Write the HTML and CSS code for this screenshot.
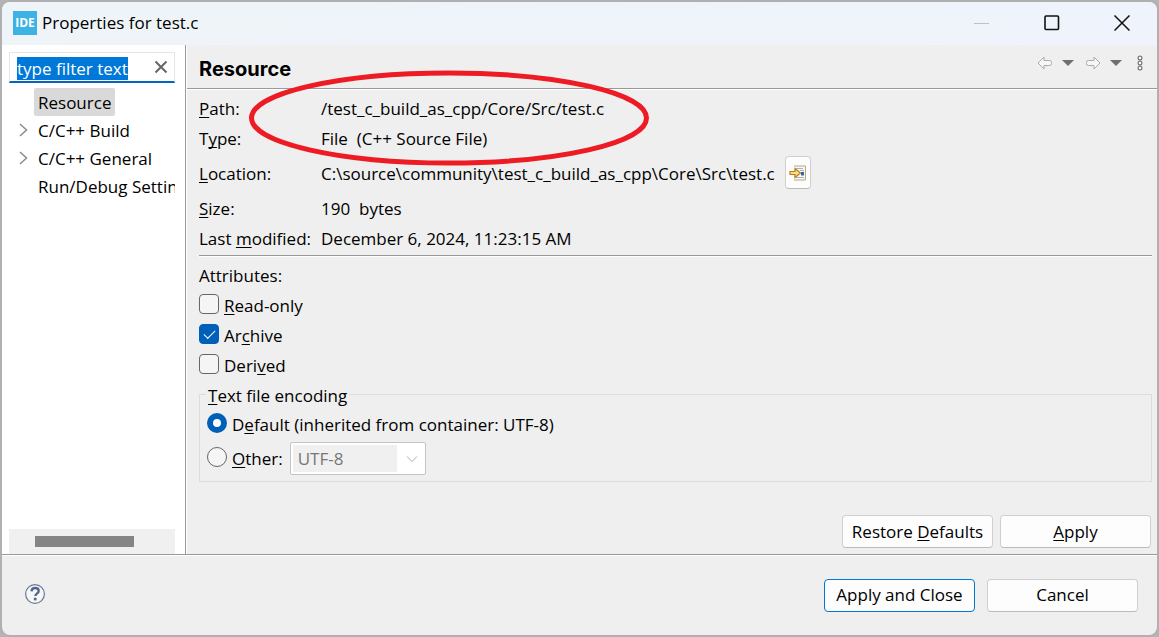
FILE: index.html
```html
<!DOCTYPE html>
<html lang="en">
<head>
<meta charset="utf-8">
<title>Properties for test.c</title>
<link rel="stylesheet" href="styles.css">
</head>
<body>
<div class="dialog">
  <header class="titlebar">
    <span class="app-icon">IDE</span>
    <h1 class="title">Properties for test.c</h1>
    <div class="window-controls">
      <button class="icon-button" aria-label="Minimize" disabled><svg width="16" height="16" viewBox="0 0 16 16"><path d="M0 8.500h15" stroke="#bcbfc6"/></svg></button>
      <button class="icon-button" aria-label="Maximize"><svg width="16" height="16" viewBox="0 0 16 16"><rect x="1" y="1" width="13.500" height="13.500" rx="1" fill="none" stroke="#111" stroke-width="1.600"/></svg></button>
      <button class="icon-button" aria-label="Close"><svg width="16" height="16" viewBox="0 0 16 16"><path d="M.5.5l15 15M15.500.5l-15 15" stroke="#111" stroke-width="1.500"/></svg></button>
    </div>
  </header>

  <div class="body">
    <nav class="sidebar">
      <div class="filter">
        <input class="filter-input" id="filter" type="text" value="type filter text" aria-label="Filter">
        <button class="icon-button" aria-label="Clear"><svg width="14" height="14" viewBox="0 0 14 14"><path d="M1.500 1.500l11 11M12.500 1.500l-11 11" stroke="#666" stroke-width="2"/></svg></button>
      </div>
      <ul class="tree">
        <li class="tree-item"><span class="twisty"></span><span class="tree-label selected">Resource</span></li>
        <li class="tree-item"><span class="twisty"><svg width="9" height="14" viewBox="0 0 9 14"><path d="M1 1l6.500 6L1 13" fill="none" stroke="#8c8c8c" stroke-width="1.500"/></svg></span><span class="tree-label">C/C++ Build</span></li>
        <li class="tree-item"><span class="twisty"><svg width="9" height="14" viewBox="0 0 9 14"><path d="M1 1l6.500 6L1 13" fill="none" stroke="#8c8c8c" stroke-width="1.500"/></svg></span><span class="tree-label">C/C++ General</span></li>
        <li class="tree-item"><span class="twisty"></span><span class="tree-label">Run/Debug Settings</span></li>
      </ul>
      <div class="scrollbar"><div class="thumb"></div></div>
    </nav>

    <main class="page">
      <div class="page-header">
        <h2 class="page-title">Resource</h2>
        <div class="page-tools">
          <button class="icon-button" aria-label="Back"><svg width="16" height="14" viewBox="0 0 16 14"><path d="M1 7l6-6v3.500h5.500q2 0 2 2v1q0 2-2 2H7V13z" fill="#f7f7f7" stroke="#aaa" stroke-linejoin="round"/></svg></button>
          <button class="icon-button" aria-label="Back history"><svg width="12" height="6" viewBox="0 0 12 6"><path d="M0 0h12L6 6z" fill="#6e6e73"/></svg></button>
          <button class="icon-button forward" aria-label="Forward"><svg width="16" height="14" viewBox="0 0 16 14"><path d="M15 7L9 1v3.500H3.500q-2 0-2 2v1q0 2 2 2H9V13z" fill="#f7f7f7" stroke="#aaa" stroke-linejoin="round"/></svg></button>
          <button class="icon-button" aria-label="Forward history"><svg width="12" height="6" viewBox="0 0 12 6"><path d="M0 0h12L6 6z" fill="#6e6e73"/></svg></button>
          <button class="icon-button menu" aria-label="View menu"><svg width="6" height="16" viewBox="0 0 6 16" fill="#fff" stroke="#77777c" stroke-width="1.200"><circle cx="3" cy="3" r="1.900"/><circle cx="3" cy="8" r="1.900"/><circle cx="3" cy="13" r="1.900"/></svg></button>
        </div>
      </div>

      <div class="page-content">
        <svg class="highlight" width="402" height="98" viewBox="0 0 402 98"><ellipse cx="201" cy="49" rx="197.500" ry="45" fill="none" stroke="#ed1c24" stroke-width="5"/></svg>
        <dl class="details">
          <dt><u>P</u>ath:</dt><dd>/test_c_build_as_cpp/Core/Src/test.c</dd>
          <dt>T<u>y</u>pe:</dt><dd>File&nbsp; (C++ Source File)</dd>
          <dt class="tall"><span><u>L</u>ocation:</span></dt>
          <dd class="tall">C:\source\community\test_c_build_as_cpp\Core\Src\test.c
            <button class="button reveal" aria-label="Show in system explorer"><svg width="18" height="16" viewBox="0 0 18 16"><path d="M5 .5h11.500v15H5z" fill="#f4f6fa"/><path d="M5 1h11.500v14H5" fill="none" stroke="#c3ab6c"/><path d="M7 3.500h7M11 5.500h4M12 10.500h3M7 12.500h8" stroke="#9db2d6"/><path d="M12 7h3v3h-3z" fill="#36649f"/><path d="M1 6.500h5V3.500L11.500 8 6 12.500v-3H1z" fill="#fbdf82" stroke="#ba7c16" stroke-width="1.200"/></svg></button>
          </dd>
          <dt><u>S</u>ize:</dt><dd>190&nbsp; bytes</dd>
          <dt>Last <u>m</u>odified:</dt><dd>December 6, 2024, 11:23:15 AM</dd>
        </dl>

        <section class="attributes">
          <h3 class="section-title">Attributes:</h3>
          <label class="option"><input class="check" type="checkbox"><span><u>R</u>ead-only</span></label>
          <label class="option"><input class="check" type="checkbox" checked><span>Ar<u>c</u>hive</span></label>
          <label class="option"><input class="check" type="checkbox"><span>Deri<u>v</u>ed</span></label>
        </section>

        <fieldset class="encoding">
          <legend><u>T</u>ext file encoding</legend>
          <label class="option"><input class="radio" type="radio" name="encoding" checked><span>D<u>e</u>fault (inherited from container: UTF-8)</span></label>
          <div class="other-row">
            <label class="option"><input class="radio" type="radio" name="encoding"><span><u>O</u>ther:</span></label>
            <div class="combo">
              <select class="combo-select" aria-label="Other encoding" disabled><option>UTF-8</option></select>
              <svg width="12" height="8" viewBox="0 0 12 8"><path d="M1 1.500l5 5 5-5" fill="none" stroke="#aaa"/></svg>
            </div>
          </div>
        </fieldset>

        <div class="page-actions">
          <button class="button">Restore <u>D</u>efaults</button>
          <button class="button"><u>A</u>pply</button>
        </div>
      </div>
    </main>
  </div>

  <footer class="footer">
    <button class="icon-button" aria-label="Help"><svg width="22" height="22" viewBox="0 0 22 22"><circle cx="11" cy="11" r="9.400" fill="#f6f6f6" stroke="#66799c" stroke-width="1.200"/><path d="M7.500 8.300C7.700 6 9.200 5 11.200 5c2 0 3.500 1.100 3.500 2.900 0 2.700-3.300 2.700-3.300 5" fill="none" stroke="#52658c" stroke-width="2.300"/><circle cx="11.200" cy="16" r="1.500" fill="#52658c"/></svg></button>
    <div class="footer-actions">
      <button class="button primary">Apply and Close</button>
      <button class="button">Cancel</button>
    </div>
  </footer>
</div>
<script src="script.js"></script>
</body>
</html>
```
FILE: styles.css
```css
* { box-sizing: border-box; }
body {
  margin: 0;
  background: #b4b4b4;
  color: #000;
  font: 17px/24px "Open Sans", "Noto Sans", sans-serif;
}
button, input, select { font: inherit; color: inherit; }
h1, h2, h3, dl, dd, ul, fieldset { margin: 0; padding: 0; }
u { text-underline-offset: 2px; text-decoration-thickness: 1px; text-decoration-skip-ink: none; }
svg { display: block; }

.dialog {
  display: flex;
  flex-direction: column;
  height: 100vh;
  border: 2px solid #b0b0b0;
  border-radius: 10px;
  background: #efefef;
  overflow: hidden;
}
.icon-button {
  display: flex;
  padding: 0;
  border: 0;
  background: none;
}

.titlebar {
  display: flex;
  align-items: center;
  height: 43px;
  padding: 0 27px 2px 11px;
  background: linear-gradient(90deg, #eef4f8, #eff3fb);
}
.app-icon {
  width: 24px;
  background: #3db2e5;
  color: #fff;
  font-size: 12px;
  font-weight: 700;
  text-align: center;
}
.title { margin-left: 5px; font-size: 17px; font-weight: 400; }
.window-controls { display: flex; gap: 54px; margin-left: auto; }

.body { display: flex; flex: 1; min-height: 0; }
.sidebar {
  display: flex;
  flex-direction: column;
  width: 184px;
  padding: 7px 10px 0 7px;
  border-right: 1px solid #999;
  background: #fff;
}
.filter {
  display: flex;
  align-items: center;
  height: 31px;
  padding-right: 6px;
  border: 1px solid #e5e5e5;
  border-bottom: 2px solid #0067c0;
}
.filter-input {
  flex: 1;
  min-width: 0;
  height: 27px;
  padding: 2px 0 0 7px;
  border: 0;
  outline: 0;
  background: none;
}
.filter-input::selection { background: #0078d7; color: #fff; }
.tree {
  flex: 1;
  padding-top: 5px;
  overflow: hidden;
  list-style: none;
}
.tree-item { display: flex; align-items: center; height: 28px; white-space: nowrap; }
.twisty { flex: none; width: 25px; padding-left: 10px; }
.tree-label { padding: 3px 4px 1px; border-radius: 2px; }
.selected { background: #d9d9d9; }
.scrollbar { height: 25px; padding: 7px 41px 7px 26px; background: #f0f0f0; }
.thumb { height: 11px; background: #858585; }

.page { display: flex; flex: 1; flex-direction: column; min-width: 0; border-left: 1px solid #fff; }
.page-header {
  display: flex;
  align-items: center;
  justify-content: space-between;
  height: 45px;
  padding: 0 14px 0 12px;
  border-bottom: 1px solid #fff;
  box-shadow: inset 0 -1px #999;
}
.page-title { padding-top: 3px; font-family: Inter, sans-serif; font-size: 20px; font-weight: 700; }
.page-tools { display: flex; align-items: center; gap: 9px; padding-bottom: 8px; }
.forward { margin-left: 2px; }
.menu { margin-left: 6px; }

.page-content {
  position: relative;
  display: flex;
  flex: 1;
  flex-direction: column;
  padding: 4px 5px 6px 12px;
}
.highlight { position: absolute; top: -21px; left: 61px; pointer-events: none; }
.details {
  display: grid;
  grid-template-columns: 122px 1fr;
  padding-bottom: 1px;
  border-bottom: 1px solid #999;
  box-shadow: 0 1px #fff;
}
.details dt, .details dd { padding: 3px 0; }
.details .tall { display: flex; align-items: center; gap: 10px; height: 40px; }
.button {
  min-width: 151px;
  height: 33px;
  padding: 0 8px;
  border: 1px solid #d0d0d0;
  border-bottom-color: #bbb;
  border-radius: 4px;
  background: #fdfdfd;
}
.details .reveal {
  display: flex;
  align-items: center;
  justify-content: center;
  min-width: 0;
  margin-bottom: 3px;
  padding: 0 3px;
}

.attributes { padding-top: 5px; }
.section-title { padding: 3px 0; font-size: 17px; font-weight: 400; }
.option { display: flex; align-items: flex-start; gap: 5px; height: 30px; padding: 3px 0; }
.check, .radio {
  flex: none;
  appearance: none;
  width: 20px;
  height: 20px;
  margin: 0;
  border: 1px solid #666;
  background: #f5f5f5;
}
.check { border-radius: 4px; }
.check:checked {
  display: grid;
  place-items: center;
  border-color: #005fb8;
  background: #005fb8;
}
.check:checked::before {
  content: "";
  width: 10px;
  height: 5px;
  margin-bottom: 3px;
  border: solid #fff;
  border-width: 0 0 1px 1px;
  transform: rotate(-45deg);
}
.radio { border-radius: 50%; }
.radio:checked { border: 6px solid #005fb8; background: #fff; }

.encoding {
  margin-top: -1px;
  padding: 2px 7px 6px;
  border: 1px solid #dcdcdc;
}
.encoding legend { margin-left: -1px; padding: 4px 2px 0; }
.other-row { display: flex; align-items: center; gap: 7px; margin-top: 2px; }
.combo {
  display: flex;
  align-items: center;
  width: 136px;
  height: 33px;
  padding: 2px 7px 2px 2px;
  border: 1px solid #c4c4c4;
  border-radius: 2px;
  background: #fff;
}
.combo-select {
  appearance: none;
  width: 104px;
  height: 27px;
  margin-right: auto;
  padding: 0 5px;
  border: 0;
  background: #f0f0f0;
  color: #777;
  opacity: 1;
}
.page-actions {
  display: flex;
  justify-content: flex-end;
  gap: 7px;
  margin-top: auto;
  padding-right: 1px;
}

.footer {
  display: flex;
  align-items: center;
  justify-content: space-between;
  height: 81px;
  padding: 0 19px 2px 22px;
  border-top: 1px solid #999;
  box-shadow: inset 0 1px #fff;
}
.footer-actions { display: flex; gap: 12px; padding-top: 2px; }
.primary { border-color: #0078d4; }
```
FILE: script.js
```js
const filter = document.getElementById("filter");
filter.focus();
filter.select();
```
